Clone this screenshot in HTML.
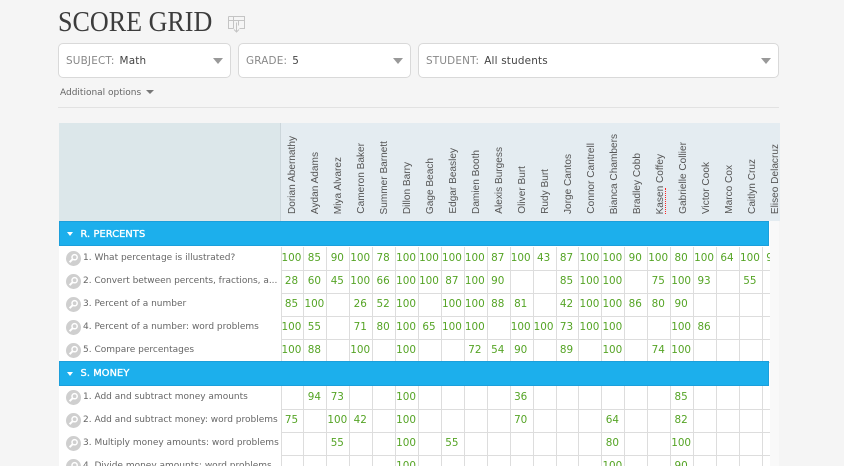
<!DOCTYPE html>
<html><head><meta charset="utf-8"><style>
*{box-sizing:border-box}
html,body{margin:0;width:844px;height:466px;overflow:hidden;background:#f5f5f5;font-family:"DejaVu Sans","Liberation Sans",sans-serif}
.a{position:absolute}
h1{position:absolute;left:58px;top:7px;margin:0;font:400 28.5px/32px "Liberation Serif","DejaVu Serif",serif;color:#3c3c3c;transform-origin:0 0;transform:scaleX(.915);white-space:nowrap}
.sel{position:absolute;top:43px;height:35px;background:#fff;border:1px solid #d9d9d9;border-radius:5px;font-size:10.4px;line-height:35px;padding-left:7px;color:#444;letter-spacing:.2px}
.sel b{font-weight:400;color:#888;margin-right:5px}
.sel:after{content:"";position:absolute;right:7px;top:14px;border:5.5px solid transparent;border-top:6px solid #999;border-bottom:0}
#t{position:absolute;left:58.5px;top:123px;width:711px;height:343px;overflow:hidden;background:#fff}
#hd{position:absolute;left:58.5px;top:123px;width:721px;height:98px;background:#e4ecf1;overflow:hidden}
#hd .l{position:absolute;left:0;top:0;width:222px;height:98px;background:#dce7ea;border-right:1px solid #ccd6db}
#hd span{position:absolute;bottom:7px;writing-mode:vertical-rl;transform:rotate(180deg);font:10.1px/12px "Liberation Sans",sans-serif;color:#555;white-space:nowrap}
.bd{position:absolute;left:0;width:710px;height:25px;background:#1cafec;border:1px solid #1c9fdb;color:#fff;font-size:9.8px;-webkit-text-stroke:.35px #fff;line-height:24px;padding-left:21px;letter-spacing:.1px}
.bd:before{content:"";position:absolute;left:7px;top:10px;border:3.5px solid transparent;border-top:4px solid #fff;border-bottom:0}
.r{position:absolute;left:0;height:23px;display:grid;grid-template-columns:222px repeat(22,22.93px);width:740px}
.r>div{font-size:9px;line-height:22px;color:#666;position:relative;padding-left:24.5px;white-space:nowrap;overflow:visible}
.r svg{position:absolute;left:7.5px;top:3.5px;width:15px;height:15px}
.r i{font-style:normal;font-size:10.4px;line-height:23px;color:#55a425;text-align:center;border-left:1px solid #ddd;border-bottom:1px solid #ddd;padding-right:2px;display:block;white-space:nowrap}
#sb{position:absolute;left:769px;top:221px;width:10px;height:245px;background:#f9f9f9}
</style></head><body>
<svg width="0" height="0" style="position:absolute"><symbol id="m" viewBox="0 0 15 15"><circle cx="7.5" cy="7.5" r="7.5" fill="#cfcfcf"/><circle cx="8.6" cy="6.2" r="2.6" fill="none" stroke="#fff" stroke-width="1.5"/><path d="M6.6 8.2L3.6 11.2" stroke="#fff" stroke-width="2"/></symbol></svg>
<h1>SCORE GRID</h1>
<svg class="a" style="left:227px;top:15px" width="19" height="19" viewBox="0 0 19 19" fill="none" stroke="#c4c4c4"><path d="M1.5 1.5h16v12h-5M6.5 13.5h-5v-12M1.5 5.5h16M6.5 1.5v12M11.5 5.5v5"/><path d="M9.5 7.5v9M7 14.5l2.5 2.5 2.5-2.5"/></svg>
<div class="sel" style="left:58px;width:173px"><b>SUBJECT:</b>Math</div>
<div class="sel" style="left:238px;width:173px"><b>GRADE:</b>5</div>
<div class="sel" style="left:418px;width:361px"><b>STUDENT:</b>All students</div>
<div class="a" style="left:60px;top:87px;font-size:9px;line-height:12px;color:#666">Additional options</div>
<div class="a" style="left:146px;top:90px;border:4px solid transparent;border-top:4px solid #777;border-bottom:0"></div>
<div class="a" style="left:58px;top:107px;width:721px;height:1px;background:#e2e2e2"></div>
<div id="sb"></div>
<div id="t">
<div class="bd" style="top:98px;line-height:25px">R. PERCENTS</div>
<div class="r" style="top:124px"><div><svg><use href="#m"/></svg>1. What percentage is illustrated?</div><i>100</i><i>85</i><i>90</i><i>100</i><i>78</i><i>100</i><i>100</i><i>100</i><i>100</i><i>87</i><i>100</i><i>43</i><i>87</i><i>100</i><i>100</i><i>90</i><i>100</i><i>80</i><i>100</i><i>64</i><i>100</i><i>90</i></div>
<div class="r" style="top:147px"><div style="letter-spacing:-.03px"><svg><use href="#m"/></svg>2. Convert between percents, fractions, a...</div><i>28</i><i>60</i><i>45</i><i>100</i><i>66</i><i>100</i><i>100</i><i>87</i><i>100</i><i>90</i><i></i><i></i><i>85</i><i>100</i><i>100</i><i></i><i>75</i><i>100</i><i>93</i><i></i><i>55</i><i></i></div>
<div class="r" style="top:170px"><div><svg><use href="#m"/></svg>3. Percent of a number</div><i>85</i><i>100</i><i></i><i>26</i><i>52</i><i>100</i><i></i><i>100</i><i>100</i><i>88</i><i>81</i><i></i><i>42</i><i>100</i><i>100</i><i>86</i><i>80</i><i>90</i><i></i><i></i><i></i><i></i></div>
<div class="r" style="top:193px"><div><svg><use href="#m"/></svg>4. Percent of a number: word problems</div><i>100</i><i>55</i><i></i><i>71</i><i>80</i><i>100</i><i>65</i><i>100</i><i>100</i><i></i><i>100</i><i>100</i><i>73</i><i>100</i><i>100</i><i></i><i></i><i>100</i><i>86</i><i></i><i></i><i></i></div>
<div class="r" style="top:216px"><div><svg><use href="#m"/></svg>5. Compare percentages</div><i>100</i><i>88</i><i></i><i>100</i><i></i><i>100</i><i></i><i></i><i>72</i><i>54</i><i>90</i><i></i><i>89</i><i></i><i>100</i><i></i><i>74</i><i>100</i><i></i><i></i><i></i><i></i></div>
<div class="bd" style="top:238px">S. MONEY</div>
<div class="r" style="top:263px"><div><svg><use href="#m"/></svg>1. Add and subtract money amounts</div><i></i><i>94</i><i>73</i><i></i><i></i><i>100</i><i></i><i></i><i></i><i></i><i>36</i><i></i><i></i><i></i><i></i><i></i><i></i><i>85</i><i></i><i></i><i></i><i></i></div>
<div class="r" style="top:286px"><div><svg><use href="#m"/></svg>2. Add and subtract money: word problems</div><i>75</i><i></i><i>100</i><i>42</i><i></i><i>100</i><i></i><i></i><i></i><i></i><i>70</i><i></i><i></i><i></i><i>64</i><i></i><i></i><i>82</i><i></i><i></i><i></i><i></i></div>
<div class="r" style="top:309px"><div><svg><use href="#m"/></svg>3. Multiply money amounts: word problems</div><i></i><i></i><i>55</i><i></i><i></i><i>100</i><i></i><i>55</i><i></i><i></i><i></i><i></i><i></i><i></i><i>80</i><i></i><i></i><i>100</i><i></i><i></i><i></i><i></i></div>
<div class="r" style="top:332px"><div><svg><use href="#m"/></svg>4. Divide money amounts: word problems</div><i></i><i></i><i></i><i></i><i></i><i>100</i><i></i><i></i><i></i><i></i><i></i><i></i><i></i><i></i><i>100</i><i></i><i></i><i>90</i><i></i><i></i><i></i><i></i></div>
</div>
<div id="hd"><div class="l"></div>
<span style="left:228px">Dorian Abernathy</span><span style="left:251px">Aydan Adams</span><span style="left:274px">Miya Alvarez</span><span style="left:297px">Cameron Baker</span><span style="left:320px">Summer Barnett</span><span style="left:343px">Dillon Barry</span><span style="left:366px">Gage Beach</span><span style="left:389px">Edgar Beasley</span><span style="left:412px">Damien Booth</span><span style="left:435px">Alexis Burgess</span><span style="left:458px">Oliver Burt</span><span style="left:481px">Rudy Burt</span><span style="left:504px">Jorge Cantos</span><span style="left:527px">Connor Cantrell</span><span style="left:550px">Bianca Chambers</span><span style="left:573px">Bradley Cobb</span><span style="left:596px">Kasen Coffey</span><span style="left:619px">Gabrielle Collier</span><span style="left:642px">Victor Cook</span><span style="left:665px">Marco Cox</span><span style="left:688px">Caitlyn Cruz</span><span style="left:711px">Eliseo Delacruz</span>
<div class="a" style="left:606px;top:65px;width:0;height:26px;border-left:1px dotted #f22"></div></div>
</body></html>
